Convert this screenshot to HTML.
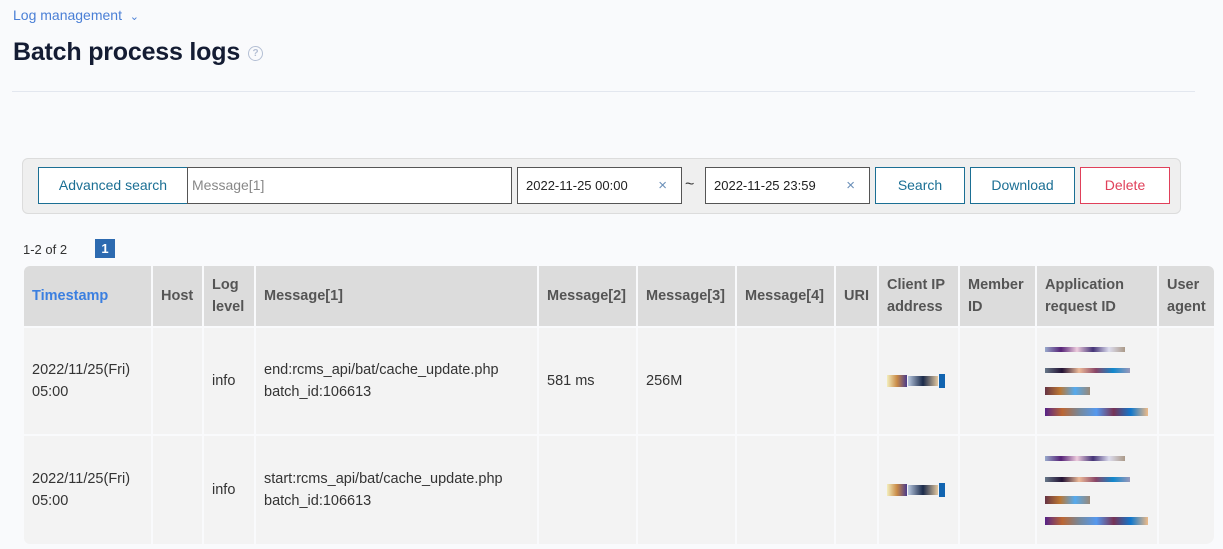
<!DOCTYPE html>
<html><head><meta charset="utf-8"><style>
body{margin:0;width:1223px;height:549px;background:#f9fafc;font-family:"Liberation Sans",sans-serif;position:relative;overflow:hidden}
.a{position:absolute}
.crumb{left:13px;top:7px;font-size:14px;color:#4a7fd6}
h1{position:absolute;left:13px;top:38px;margin:0;font-size:25px;font-weight:600;color:#141c33;letter-spacing:-0.2px}
.q{left:248px;top:46px;width:13px;height:13px;border:1.5px solid #b4bfd4;border-radius:50%;font-size:10px;color:#b4bfd4;text-align:center;line-height:13px;font-weight:bold}
.hr{left:12px;top:91px;width:1183px;height:1px;background:#e3e7ef}
.bar{left:22px;top:158px;width:1157px;height:54px;background:#efefef;border:1px solid #dcdcdc;border-radius:6px}
.bx{position:absolute;top:167px;height:37px;box-sizing:border-box;font-size:14px;line-height:35px;background:#fff}
.btn{border:1px solid #1b6f94;color:#1b6f94;text-align:center}
.inp{border:1px solid #555;color:#222;padding-left:8px;font-size:13px}
.x{position:absolute;right:14px;top:0;color:#6a8fb8;font-size:15px}
table{position:absolute;left:22px;top:264px;border-collapse:separate;border-spacing:2px;table-layout:fixed}
td,th{padding:0 8px;font-size:14.5px;text-align:left;vertical-align:middle;line-height:22px}
th{background:#dcdcdc;color:#555;font-weight:600;height:60px}
td{background:#f3f3f3;color:#333}
.px{display:inline-block;height:5px;margin-right:1px;vertical-align:middle}
</style></head><body>
<div class="a crumb">Log management&nbsp;&nbsp;<span style="font-size:11px">&#8964;</span></div>
<h1>Batch process logs</h1>
<div class="a q">?</div>
<div class="a hr"></div>
<div class="a bar"></div>
<div class="bx btn" style="left:38px;width:150px">Advanced search</div>
<div class="bx inp" style="left:187px;width:325px;color:#888;padding-left:4px;font-size:14px">Message[1]</div>
<div class="bx inp" style="left:517px;width:165px">2022-11-25 00:00<span class="x">×</span></div>
<div class="a" style="left:685px;top:176px;font-size:16px;color:#333">~</div>
<div class="bx inp" style="left:705px;width:165px">2022-11-25 23:59<span class="x">×</span></div>
<div class="bx btn" style="left:875px;width:90px">Search</div>
<div class="bx btn" style="left:970px;width:105px">Download</div>
<div class="bx btn" style="left:1080px;width:90px;border-color:#e0405a;color:#e0405a">Delete</div>
<div class="a" style="left:23px;top:242px;font-size:13px;color:#333">1-2 of 2</div>
<div class="a" style="left:95px;top:239px;width:20px;height:19px;background:#2d6ab0;color:#fff;font-size:13px;font-weight:bold;text-align:center;line-height:19px">1</div>
<table>
<colgroup><col style="width:127px"><col style="width:49px"><col style="width:50px"><col style="width:281px"><col style="width:97px"><col style="width:97px"><col style="width:97px"><col style="width:41px"><col style="width:79px"><col style="width:75px"><col style="width:118px"><col style="width:54px"></colgroup>
<tr><th style="color:#3b7fe0;border-top-left-radius:6px">Timestamp</th><th>Host</th><th>Log level</th><th>Message[1]</th><th>Message[2]</th><th>Message[3]</th><th>Message[4]</th><th>URI</th><th>Client IP address</th><th>Member ID</th><th>Application request ID</th><th style="border-top-right-radius:6px">User agent</th></tr>
<tr style="height:106px"><td>2022/11/25(Fri)<br>05:00</td><td></td><td>info</td><td>end:rcms_api/bat/cache_update.php<br>batch_id:106613</td><td>581 ms</td><td>256M</td><td></td><td></td>
<td><span class="px" style="width:20px;height:12px;background:linear-gradient(90deg,#f3eebd,#c98a46,#4a3a8a)"></span><span class="px" style="width:30px;height:10px;background:linear-gradient(90deg,#b8c8e0,#1a2a4a,#e3c8a0)"></span><span class="px" style="width:6px;height:14px;background:#1164b0"></span></td><td></td>
<td style="line-height:21px"><span class="px" style="width:80px;background:linear-gradient(90deg,#9ac,#527,#ecd,#437,#dde,#a98)"></span><br><span class="px" style="width:85px;background:linear-gradient(90deg,#678,#213,#eb9,#846,#18c,#99b)"></span><br><span class="px" style="width:45px;height:8px;background:linear-gradient(90deg,#634,#b73,#5ae,#987)"></span><br><span class="px" style="width:103px;height:8px;background:linear-gradient(90deg,#528,#b63,#789,#59e,#735,#17c,#eb8)"></span></td><td></td></tr>
<tr style="height:108px"><td style="border-bottom-left-radius:6px">2022/11/25(Fri)<br>05:00</td><td></td><td>info</td><td>start:rcms_api/bat/cache_update.php<br>batch_id:106613</td><td></td><td></td><td></td><td></td>
<td><span class="px" style="width:20px;height:12px;background:linear-gradient(90deg,#f3eebd,#c98a46,#4a3a8a)"></span><span class="px" style="width:30px;height:10px;background:linear-gradient(90deg,#b8c8e0,#1a2a4a,#e3c8a0)"></span><span class="px" style="width:6px;height:14px;background:#1164b0"></span></td><td></td>
<td style="line-height:21px"><span class="px" style="width:80px;background:linear-gradient(90deg,#9ac,#527,#ecd,#437,#dde,#a98)"></span><br><span class="px" style="width:85px;background:linear-gradient(90deg,#678,#213,#eb9,#846,#18c,#99b)"></span><br><span class="px" style="width:45px;height:8px;background:linear-gradient(90deg,#634,#b73,#5ae,#987)"></span><br><span class="px" style="width:103px;height:8px;background:linear-gradient(90deg,#528,#b63,#789,#59e,#735,#17c,#eb8)"></span></td><td style="border-bottom-right-radius:8px"></td></tr>
</table>
</body></html>
